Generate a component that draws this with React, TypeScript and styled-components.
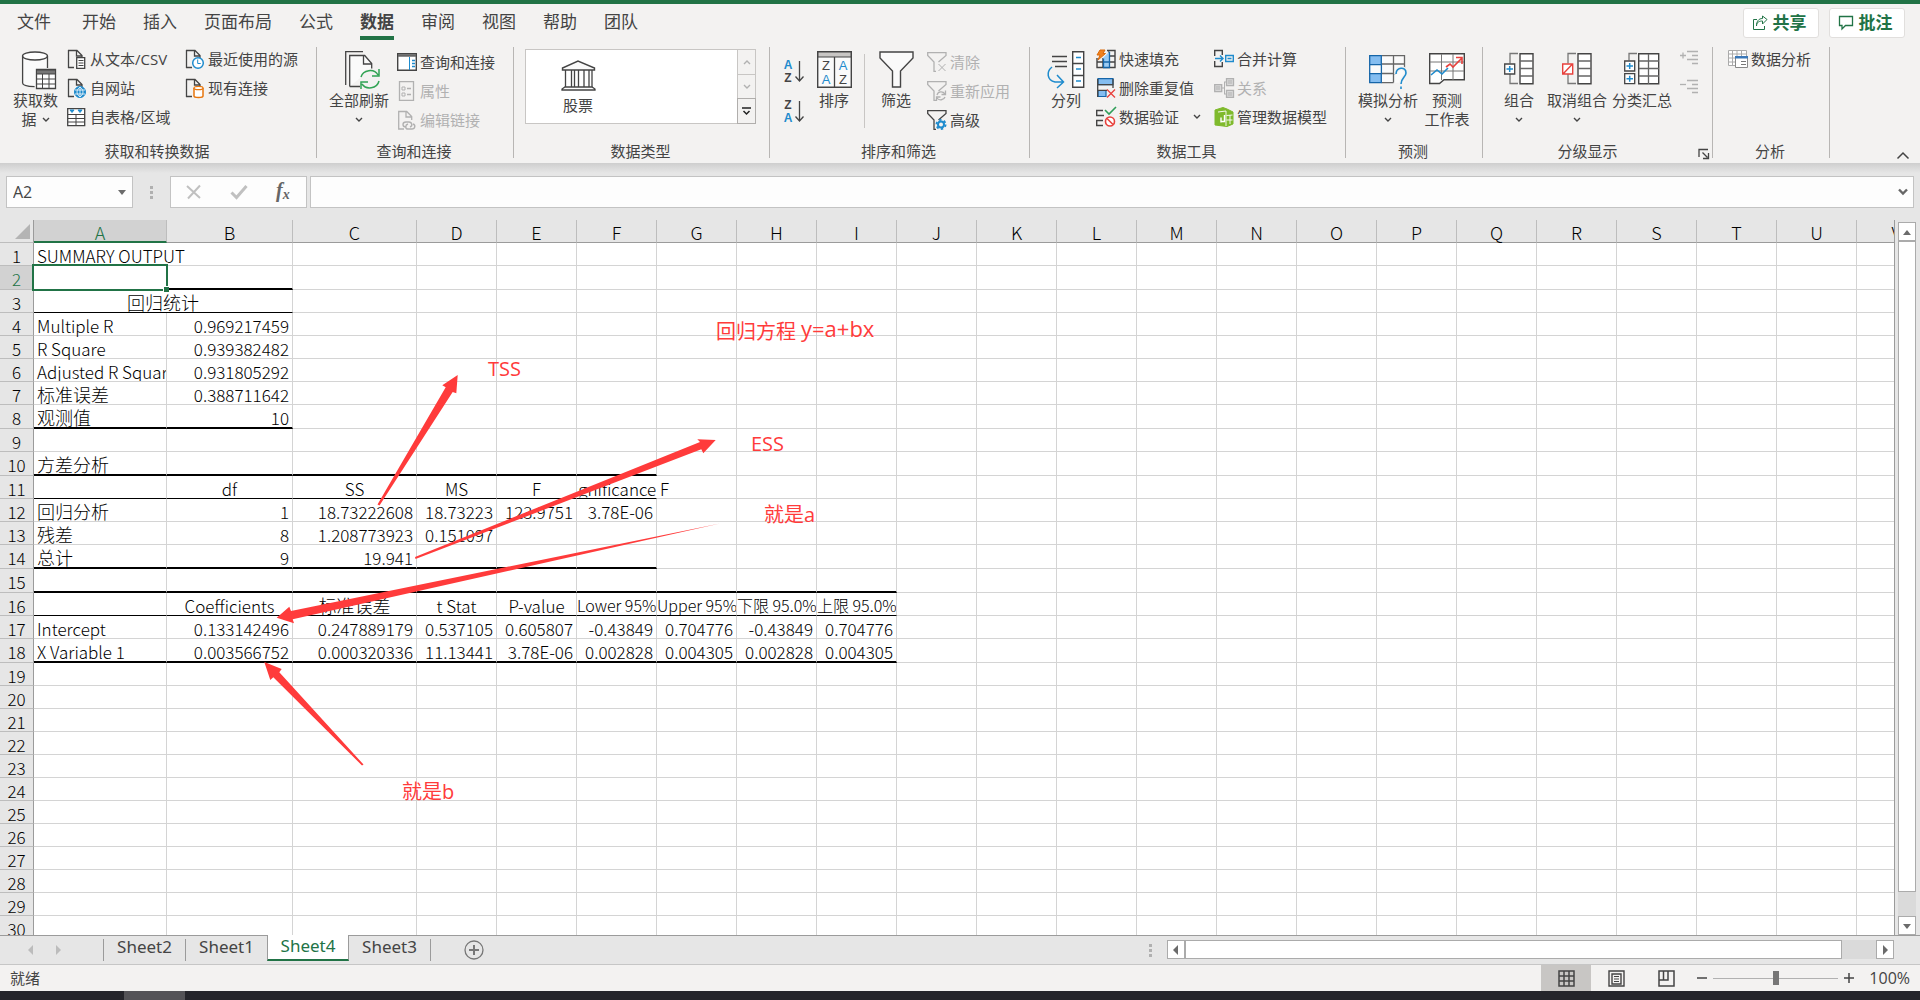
import React from "react";
import styled, { createGlobalStyle, css } from "styled-components";

const uiFont = `"Open Sans", "Noto Sans CJK SC", sans-serif`;
const cellFont = `"Noto Sans CJK SC", sans-serif`;
const green = "#217346";
const ink = "#444444";
const faded = "#b1b1b1";
const blue = "#1e8bcd";
const red = "#ff3b3b";

const Global = createGlobalStyle`
  *, *::before, *::after { box-sizing: border-box; }
  html, body { margin: 0; height: 100%; overflow: hidden; background: #e6e6e6; }
  button, input { font: inherit; color: inherit; margin: 0; padding: 0; border: 0; background: none; border-radius: 0; outline: 0; }
  button { cursor: pointer; }
  svg { display: block; flex: none; overflow: visible; }
`;

const Shell = styled.div`
  display: flex;
  flex-direction: column;
  height: 100vh;
  font: 15px/20px ${uiFont};
  color: ${ink};
  background: #e6e6e6;
`;

const TitleStrip = styled.div`
  height: 4px;
  flex: none;
  background: ${green};
`;

/* ---------- ribbon tabs ---------- */

const TabRow = styled.header`
  display: flex;
  flex: none;
  height: 40px;
  padding: 0 15px 0 17px;
  justify-content: space-between;
  background: #f3f2f1;
`;

const TabList = styled.nav`
  display: flex;
  gap: 27px;
  height: 36px;
`;

const RibbonTab = styled.button<{ $active?: boolean; $first?: boolean }>`
  font-size: 17px;
  line-height: 24px;
  height: 36px;
  padding-top: 4px;
  margin-right: ${(p) => (p.$first ? "4px" : "0")};
  border-bottom: 4px solid ${(p) => (p.$active ? green : "transparent")};
  font-weight: ${(p) => (p.$active ? 700 : 400)};
`;

const ShareRow = styled.div`
  display: flex;
  gap: 10px;
  padding-top: 4px;
`;

const ShareButton = styled.button`
  display: flex;
  align-items: center;
  justify-content: center;
  gap: 5px;
  width: 76px;
  height: 30px;
  padding-right: 4px;
  border: 1px solid #e1dfdd;
  border-radius: 3px;
  background: #fff;
  color: ${green};
  font-size: 17px;
  font-weight: 700;
`;

/* ---------- ribbon ---------- */

const Ribbon = styled.section`
  display: flex;
  flex: none;
  height: 119px;
  background: #f3f2f1;
`;

const GroupBox = styled.div<{ $w: number; $pad: number }>`
  display: flex;
  flex-direction: column;
  justify-content: space-between;
  width: ${(p) => p.$w}px;
  padding-bottom: 2px;
  & > div:first-child {
    padding-left: ${(p) => p.$pad}px;
  }
`;

const GroupBody = styled.div`
  display: flex;
  align-items: flex-start;
`;

const GroupLabel = styled.div`
  display: flex;
  align-items: center;
  height: 20px;
  padding-right: 2px;
  & > span {
    flex: 1;
    text-align: center;
  }
`;

const Divider = styled.div`
  width: 1px;
  margin: 3px 0 5px;
  background: #b8b6b4;
`;

const InnerDivider = styled.div`
  width: 1px;
  height: 74px;
  margin: 10px 6px 0 8px;
  background: #c8c6c4;
`;

const Big = styled.button<{ $w: number; $ml?: number }>`
  display: flex;
  flex-direction: column;
  align-items: center;
  width: ${(p) => p.$w}px;
  margin-left: ${(p) => p.$ml ?? 0}px;
  padding-top: 7px;
  line-height: 19px;
  white-space: nowrap;
  & > svg:first-child {
    margin-bottom: 2px;
  }
`;

const Line = styled.span`
  display: flex;
  align-items: center;
  justify-content: center;
  gap: 5px;
  height: 19px;
`;

const Col = styled.div<{ $w?: number; $ml?: number; $low?: boolean }>`
  display: flex;
  flex-direction: column;
  width: ${(p) => (p.$w ? `${p.$w}px` : "auto")};
  margin: ${(p) => (p.$low ? 3 : 0)}px 0 0 ${(p) => p.$ml ?? 0}px;
`;

const Small = styled.button`
  display: flex;
  align-items: center;
  gap: 3px;
  height: 29px;
  white-space: nowrap;
  &:disabled {
    color: ${faded};
  }
`;

const DropSmall = styled(Small)`
  & > svg:last-child {
    margin-left: 11px;
  }
`;

const SortCol = styled.div`
  display: flex;
  flex-direction: column;
  gap: 16px;
  padding-top: 15px;
  width: 26px;
`;

const SortButton = styled.button`
  height: 24px;
`;

const Gallery = styled.div`
  display: flex;
  width: 231px;
  height: 75px;
  margin-top: 5px;
  border: 1px solid #c8c6c4;
  background: #fff;
`;

const GalleryItem = styled.button`
  display: flex;
  flex-direction: column;
  align-items: center;
  gap: 4px;
  width: 104px;
  padding-top: 10px;
`;

const GalleryScroll = styled.div`
  display: flex;
  flex-direction: column;
  width: 18px;
  margin-left: auto;
  border-left: 1px solid #c8c6c4;
  background: #f3f2f1;
`;

const GalleryArrow = styled.button<{ $last?: boolean }>`
  display: flex;
  flex: 1;
  align-items: center;
  justify-content: center;
  ${(p) => !p.$last && css`border-bottom: 1px solid #c8c6c4;`}
  ${(p) => p.$last && css`outline: 1px solid #b0aeac;`}
`;

const Launcher = styled.button`
  width: 18px;
  height: 14px;
  padding-left: 6px;
  align-self: flex-end;
`;

const Collapse = styled.button`
  margin: auto 10px 3px auto;
`;

/* ---------- formula bar ---------- */

const FormulaRow = styled.section`
  display: flex;
  flex: none;
  height: 57px;
  padding: 13px 6px 12px;
  font-size: 16px;
  background: linear-gradient(#cecece, #e6e6e6 10px);
`;

const Field = styled.div<{ $w?: number }>`
  display: flex;
  align-items: center;
  ${(p) => (p.$w ? `width: ${p.$w}px;` : "flex: 1;")}
  border: 1px solid #c3c3c3;
  background: #fdfdfd;
`;

const NameInput = styled.input`
  flex: 1;
  min-width: 0;
  padding-left: 6px;
`;

const FieldButton = styled.button`
  display: flex;
  align-items: center;
  justify-content: center;
  width: 21px;
  height: 100%;
`;

const FormulaTools = styled(Field)`
  justify-content: center;
  gap: 24px;
  margin-right: 3px;
`;

const Grip = styled.div`
  display: flex;
  flex-direction: column;
  align-items: center;
  justify-content: center;
  gap: 2px;
  width: 37px;
  & > i {
    width: 3px;
    height: 3px;
    background: #b0b0b0;
  }
`;

/* ---------- sheet ---------- */

const SheetArea = styled.main`
  display: flex;
  flex: 1;
  min-height: 0;
`;

const Canvas = styled.div`
  position: relative;
  flex: 1;
  min-width: 0;
  overflow: hidden;
  border-right: 1px solid #9b9b9b;
`;

const Grid = styled.table`
  table-layout: fixed;
  width: 1937px;
  border-collapse: separate;
  border-spacing: 0;
  color: #000;
  background: #fff;
  font: 17px/19px ${cellFont};
`;

const ColHead = styled.th<{ $on?: boolean }>`
  height: 23px;
  padding: 2px 0 0;
  font-size: 18px;
  font-weight: 300;
  line-height: 18px;
  color: ${(p) => (p.$on ? green : "#000")};
  background: ${(p) => (p.$on ? "#d2d2d2" : "#e6e6e6")};
  border-right: 1px solid #bdbdbd;
  border-bottom: ${(p) => (p.$on ? `2px solid ${green}` : "1px solid #9b9b9b")};
`;

const Corner = styled.th`
  padding: 0 3px 3px 0;
  vertical-align: bottom;
  background: #e6e6e6;
  border-right: 1px solid #9b9b9b;
  border-bottom: 1px solid #bdbdbd;
  & > svg {
    margin-left: auto;
  }
`;

const RowHead = styled.th<{ $on?: boolean; $h: number }>`
  height: ${(p) => p.$h}px;
  padding: 2px 0 0;
  font-weight: 300;
  color: ${(p) => (p.$on ? green : "#000")};
  background: ${(p) => (p.$on ? "#d2d2d2" : "#e6e6e6")};
  border-right: 1px solid #9b9b9b;
  border-bottom: 1px solid #bdbdbd;
`;

type CellKind = "num" | "text" | "head";

const Cell = styled.td<{ $kind: CellKind; $rule: number; $open?: boolean; $dense?: boolean; $clip?: boolean }>`
  padding: ${(p) => (p.$kind === "head" ? "2px 0 0" : "2px 3px 0")};
  white-space: nowrap;
  font-weight: 300;
  overflow: ${(p) => (p.$clip ? "hidden" : "visible")};
  text-align: ${(p) => ({ num: "right", text: "left", head: "center" })[p.$kind]};
  font-size: ${(p) => (p.$dense ? 16 : 17)}px;
  border-right: 1px solid ${(p) => (p.$open ? "transparent" : "#d4d4d4")};
  border-bottom: ${(p) => (p.$rule ? `${p.$rule}px solid #000` : "1px solid #d4d4d4")};
`;

const Han = styled.span<{ $dense?: boolean }>`
  font-size: ${(p) => (p.$dense ? 16 : 18)}px;
`;

const Spill = styled.div`
  display: flex;
  justify-content: center;
  clip-path: inset(0 -40px 0 0);
`;

const SelectedCell = styled.td`
  position: relative;
  border-right: 1px solid #d4d4d4;
  border-bottom: 1px solid #d4d4d4;
  &::before {
    content: "";
    position: absolute;
    inset: -2px -2px -2px -2px;
    border: 2px solid ${green};
  }
  &::after {
    content: "";
    position: absolute;
    right: -3px;
    bottom: -3px;
    width: 6px;
    height: 6px;
    border: solid #fff;
    border-width: 1px 0 0 1px;
    background: ${green};
  }
`;

const Arrows = styled.svg`
  position: absolute;
  left: 0;
  top: 0;
  pointer-events: none;
`;

const Note = styled.span<{ $x: number; $y: number; $size?: number }>`
  position: absolute;
  left: ${(p) => p.$x}px;
  top: ${(p) => p.$y}px;
  font-size: ${(p) => p.$size ?? 20}px;
  line-height: 28px;
  color: ${red};
  white-space: nowrap;
`;

/* ---------- scroll bars ---------- */

const VBar = styled.div`
  display: flex;
  flex-direction: column;
  width: 18px;
  margin: 2px 4px 0 3px;
  background: #dadada;
`;

const ScrollButton = styled.button`
  display: flex;
  flex: none;
  align-items: center;
  justify-content: center;
  width: 18px;
  height: 19px;
  border: 1px solid #ababab;
  background: #fff;
`;

const VTrack = styled.div`
  flex: 1;
  padding-bottom: 24px;
`;

const Thumb = styled.div`
  height: 100%;
  border: 1px solid #ababab;
  background: #fff;
`;

/* ---------- sheet tabs ---------- */

const SheetBar = styled.nav`
  display: flex;
  flex: none;
  height: 30px;
  border-top: 1px solid #9b9b9b;
  border-bottom: 1px solid #c6c6c6;
`;

const SheetNav = styled.div`
  display: flex;
  align-items: center;
  gap: 17px;
  width: 103px;
  padding-left: 26px;
`;

const SheetTabs = styled.div`
  display: flex;
  padding-top: 3px;
  height: 25px;
`;

const SheetTab = styled.button<{ $active?: boolean; $last?: boolean }>`
  width: 82px;
  padding-bottom: 6px;
  font: 17px/16px "Noto Sans", sans-serif;
  border-left: 1px solid #9b9b9b;
  ${(p) => p.$last && css`border-left: 0; border-right: 1px solid #9b9b9b;`}
  ${(p) =>
    p.$active &&
    css`
      margin-top: -4px;
      height: 26px;
      padding-bottom: 2px;
      color: ${green};
      background: #fff;
      border-right: 1px solid #9b9b9b;
      border-bottom: 2px solid ${green};
    `}
`;

const AddSheet = styled.button`
  margin-left: 33px;
`;

const BarGrip = styled(Grip)`
  width: 34px;
  margin-left: auto;
`;

const HBar = styled.div`
  display: flex;
  flex: 0 1 727px;
  height: 19px;
  margin: 4px 26px 0 0;
  background: #dadada;
`;

const HTrack = styled.div`
  flex: 1;
  padding-right: 34px;
`;

/* ---------- status bar ---------- */

const StatusBar = styled.footer`
  display: flex;
  flex: none;
  align-items: center;
  justify-content: space-between;
  height: 26px;
  padding: 0 10px;
  background: #f3f2f1;
`;

const StatusTools = styled.div`
  display: flex;
  align-items: center;
`;

const ViewButton = styled.button<{ $active?: boolean }>`
  display: flex;
  align-items: center;
  justify-content: center;
  width: 50px;
  height: 26px;
  background: ${(p) => (p.$active ? "#c8c6c4" : "transparent")};
`;

const ZoomGroup = styled.div`
  display: flex;
  align-items: center;
  gap: 5px;
  margin-left: 5px;
`;

const ZoomButton = styled.button`
  width: 12px;
  height: 20px;
  display: flex;
  align-items: center;
  justify-content: center;
`;

const ZoomRange = styled.input`
  appearance: none;
  width: 125px;
  height: 16px;
  background: linear-gradient(#b1b1b1, #b1b1b1) center / 100% 1px no-repeat;
  &::-webkit-slider-thumb {
    appearance: none;
    width: 6px;
    height: 14px;
    background: #767676;
  }
`;

const ZoomValue = styled.span`
  width: 50px;
  text-align: right;
  font-size: 16px;
`;

const Taskbar = styled.div`
  flex: none;
  height: 9px;
  padding-left: 124px;
  background: #25252b;
`;

const TaskItem = styled.div`
  width: 61px;
  height: 9px;
  background: #545357;
`;

/* ---------- icons ---------- */

type IconProps = { w: number; h: number; box?: string; children: React.ReactNode };
const Icon = ({ w, h, box, children }: IconProps) => (
  <svg width={w} height={h} viewBox={box ?? `0 0 ${w} ${h}`} fill="none" stroke={ink} strokeWidth="1" aria-hidden="true">
    {children}
  </svg>
);

const Chevron = ({ up, color = ink }: { up?: boolean; color?: string }) => (
  <Icon w={8} h={6}>
    <path d={up ? "M1 5L4 2L7 5" : "M1 1L4 4L7 1"} stroke={color} strokeWidth="1.4" />
  </Icon>
);

const Page = ({ color = ink }: { color?: string }) => (
  <path d="M1.500 1v18M1 1.500h9l5 5v3M9.500 1.500v5.500h5.500M1 18.500h6" stroke={color} strokeWidth="1.300" />
);

const DatabaseIcon = () => (
  <Icon w={41} h={38} box="-7 0 41 38">
    <path d="M.7 5v27c0 2 5 4 12.300 4h1V19h12.400V5z" fill="#fafafa" stroke="none" />
    <ellipse cx="13" cy="5" rx="12.500" ry="4" fill="#fff" strokeWidth="1.300" />
    <path d="M.6 5v27c0 2 5 3.500 12 3.700M25.500 5v12" strokeWidth="1.300" />
    <path d="M14.500 18.500h19v19h-19z" fill="#fff" strokeWidth="1.300" />
    <path d="M14.500 19h19v4h-19z" fill="#777" />
    <path d="M14 28h20M14 33h20M20.500 23v15M27 23v15" />
  </Icon>
);

const CsvIcon = () => (
  <Icon w={20} h={20}>
    <Page />
    <path d="M9.700 8.700h8v10.600h-8z" fill="#fff" strokeWidth="1.300" />
    <path d="M11.500 11.500h5M11.500 14h5M11.500 16.500h5" />
  </Icon>
);
const WebIcon = () => (
  <Icon w={20} h={20}>
    <Page />
    <circle cx="13" cy="14" r="5.500" fill={blue} stroke={blue} />
    <path d="M8 12h10M8 16h10M13 9v10M13 9c-4 3-4 7 0 10M13 9c4 3 4 7 0 10" stroke="#fff" strokeWidth=".8" />
  </Icon>
);
const TableIcon = () => (
  <Icon w={20} h={20}>
    <path d="M.7 1.700h17v17h-17z" fill="#fff" strokeWidth="1.300" />
    <path d="M1 7.500h17M1 11.500h17M1 15h17M9 7v11.500" />
    <path d="M3 3h4L5 5.500zM11 3h4l-2 2.500z" fill={blue} stroke={blue} />
  </Icon>
);
const RecentIcon = () => (
  <Icon w={20} h={20}>
    <Page />
    <circle cx="13" cy="14" r="5.300" fill="#fff" stroke={blue} strokeWidth="1.500" />
    <path d="M12.700 10.500v4h3" stroke={blue} />
  </Icon>
);
const ExistingIcon = () => (
  <Icon w={20} h={20}>
    <Page />
    <path d="M9 10v8c0 2 9 2 9 0v-8" fill="#fff" stroke="#e8760c" strokeWidth="1.500" />
    <ellipse cx="13.500" cy="10" rx="4.500" ry="1.700" fill="#fff" stroke="#e8760c" strokeWidth="1.300" />
  </Icon>
);
const RefreshAllIcon = () => (
  <Icon w={41} h={38} box="-6 0 41 38">
    <path d="M.7 34V.7H18" strokeWidth="1.300" />
    <path d="M4.700 35.500V4.500h15l7 8v5M4.700 35.500H15" fill="#fafafa" strokeWidth="1.300" />
    <path d="M18.500 4.500v8.500h8.500" strokeWidth="1.300" />
    <circle cx="25" cy="28" r="10" fill="#f3f2f1" stroke="none" />
    <path d="M16 26c2-7 13-9 17-2M34 18v7h-7M34 30c-2 8-13 9-17 3M16 38v-7h7" stroke="#31a354" strokeWidth="1.500" />
  </Icon>
);
const QueryIcon = () => (
  <Icon w={20} h={20}>
    <path d="M.7 1.700h18.600v16.600H.7z" fill="#fff" strokeWidth="1.400" />
    <path d="M1 3.500h18" strokeWidth="2.500" stroke="#666" />
    <path d="M12.500 5v13" stroke={blue} />
    <path d="M15 8.500h3M15 11.500h3M15 14.500h3" stroke={blue} strokeWidth="1.600" />
  </Icon>
);
const PropsIcon = () => (
  <Icon w={20} h={20}>
    <path d="M2.500.7h14v18.600h-14z" stroke={faded} strokeWidth="1.300" />
    <path d="M5 6h3v3H5zM5 12h3v3H5z" stroke={faded} />
    <path d="M10 7.500h4M10 13.500h4" stroke={faded} strokeWidth="1.500" />
  </Icon>
);
const EditLinksIcon = () => (
  <Icon w={20} h={20}>
    <path d="M7 19H1.700V1.500h8l5 5V10M9 1.500V7h5.500" stroke={faded} strokeWidth="1.300" />
    <path d="M9 17c-4 0-4-5 0-5h3c3 0 4 4 1 5M16 14c3 1 2 5-1 5h-4c-3 0-3-4 0-5" stroke={faded} strokeWidth="1.400" />
  </Icon>
);
const BankIcon = () => (
  <Icon w={35} h={31}>
    <path d="M1.500 10V8L17 1l16.500 7v2z" fill="#fafafa" strokeWidth="1.400" />
    <path d="M4.500 10v17M10.500 10v17M13.500 10v17M17.500 10v17M23 10v17M28 10v17M31 10v17" strokeWidth="1.300" />
    <path d="M4 27h27l3 2v1H1v-1z" fill="#fff" strokeWidth="1.300" />
  </Icon>
);
const letter = (x: number, y: number, ch: string, color: string, size: number, weight = 700) => (
  <text x={x} y={y} fill={color} stroke="none" fontFamily="Liberation Sans" fontSize={size} fontWeight={weight} textAnchor="middle">
    {ch}
  </text>
);
const SortAz = ({ down }: { down?: boolean }) => (
  <Icon w={24} h={24}>
    {letter(6, 10, down ? "Z" : "A", down ? ink : blue, 12)}
    {letter(6, 23, down ? "A" : "Z", down ? blue : ink, 12)}
    <path d="M17.500 2v20M13.500 17.500l4 4.500 4-4.500" strokeWidth="1.300" />
  </Icon>
);
const SortIcon = () => (
  <Icon w={35} h={38}>
    <path d="M.7.7h33.600v35.600H.7z" fill="#fafafa" strokeWidth="1.400" />
    <path d="M1 1h33v5H1z" fill="#c8c6c4" />
    <path d="M17.500 6v30" strokeWidth="1.300" />
    {letter(9, 19, "Z", ink, 13, 400)}
    {letter(9, 33, "A", blue, 13, 400)}
    {letter(26, 19, "A", blue, 13, 400)}
    {letter(26, 33, "Z", ink, 13, 400)}
  </Icon>
);
const FilterIcon = () => (
  <Icon w={35} h={38}>
    <path d="M1 1h33v6L21.500 20v16h-8V20L1 7z" fill="#fafafa" strokeWidth="1.400" />
  </Icon>
);
const funnel = (c: string) => <path d="M11.500 10L19 3.500V.7H.7v2.800L7 10v9.300h2" stroke={c} strokeWidth="1.300" />;
const ClearIcon = () => (
  <Icon w={20} h={20}>
    {funnel(faded)}
    <path d="M11.500 12l7 7M18.500 12l-7 7" stroke={faded} />
  </Icon>
);
const ReapplyIcon = () => (
  <Icon w={20} h={20}>
    {funnel(faded)}
    <path d="M10 14c1-4 6-4 8-1M18.500 9.500v4h-4M18 16c-1 3-6 4-8 1M9.500 20v-4h4" stroke={faded} strokeWidth="1.300" />
  </Icon>
);
const AdvancedIcon = () => (
  <Icon w={20} h={20}>
    {funnel(ink)}
    <circle cx="14" cy="14.500" r="3" fill="#f3f2f1" stroke={blue} strokeWidth="2" />
    <circle cx="14" cy="14.500" r="4.600" stroke={blue} strokeWidth="1.800" strokeDasharray="2.400 2.400" />
  </Icon>
);
const TextToColumnsIcon = () => (
  <Icon w={38} h={38}>
    <path d="M5 5.500h15M5 10.500h15M8 15.500h12" strokeWidth="1.300" />
    <path d="M25.700.7h11v35.600h-11zM25.700 12.500h11M25.700 24.500h11" fill="#fff" strokeWidth="1.400" />
    <path d="M29 6.500h5M29 18h5M29 30h5" stroke={blue} strokeWidth="1.400" />
    <path d="M5 16c-6 5-5 13 3 15h8M10 24l6.500 7L10 37" stroke={blue} strokeWidth="1.500" />
  </Icon>
);
const FlashFillIcon = () => (
  <Icon w={20} h={20}>
    <path d="M1 9v9.500h18V1.500h-8M1 13h18M7 9v9.500M13 2v16.500M10 7h9" fill="none" strokeWidth="1.400" />
    <path d="M7 18V9l7-7v16z" fill="#9cccf4" stroke="none" />
    <path d="M7.500 18.500V9.500M13.500 3v15.500M7 13h7M7 18.500h7" stroke="#1565a8" strokeWidth="1.300" />
    <path d="M4 1h5L7 4.500h2.500L2 11l2-5H1z" fill="#f2811d" stroke="#d96a0b" />
  </Icon>
);
const RemoveDupIcon = () => (
  <Icon w={20} h={20}>
    <path d="M2 .7h15v6H2zM2 12.500h8v6H2z" fill="#84bdf0" stroke="#1565a8" strokeWidth="1.200" />
    <path d="M1.700 1v18M17 1v9M2 6.700h15M2 12.300h9" strokeWidth="1.300" />
    <path d="M11 11.500l8 8M19 11.500l-8 8" stroke="#e8413c" strokeWidth="1.300" />
  </Icon>
);
const ValidateIcon = () => (
  <Icon w={20} h={20}>
    <path d="M7 3.500H.7v5H8M7 13.500H.7v5H7" strokeWidth="1.400" />
    <path d="M9 3l4 4 7-7" stroke="#2f9e58" strokeWidth="1.600" />
    <circle cx="14" cy="14.500" r="4.500" fill="#fff" stroke="#e8413c" strokeWidth="1.600" />
    <path d="M11 11.500l6 6" stroke="#e8413c" strokeWidth="1.600" />
  </Icon>
);
const ConsolidateIcon = () => (
  <Icon w={20} h={20}>
    <path d="M.7 7V1.500h7.600V6M.7 12v5.500h7.600V13" strokeWidth="1.400" />
    <path d="M1 9.500h8M6 6.500l3 3-3 3" stroke={blue} strokeWidth="1.400" />
    <path d="M11.700 6.500h7.600v6h-7.600zM13.500 9.500h4" stroke={blue} strokeWidth="1.400" />
  </Icon>
);
const RelationIcon = () => (
  <Icon w={20} h={20}>
    <path d="M.7 6.700h7v7h-7zM12.500.7h7v7h-7zM12.500 12.300h7v7h-7z" fill="#d8d8d8" stroke={faded} strokeWidth="1.300" />
    <path d="M8 10h3M10.500 4v12M10 4h2M10 16h2M14 3h4M14 5h4M14 15h4M14 17h4M2 9h4M2 11h4" stroke={faded} />
  </Icon>
);
const ModelIcon = () => (
  <Icon w={20} h={20}>
    <path d="M1 3l8-2.500 4 1.500 6 3v12l-6 2.500L1 18z" fill="#7fba2c" stroke="#7fba2c" />
    <path d="M4 5l8-1v15M16 8v9M12.500 8.500l6-.5M12.500 13h6" stroke="#fff" strokeWidth=".9" />
    <path d="M10.500 8v6.500H7M7 10.500v5" stroke="#fff" strokeWidth="1.400" />
  </Icon>
);
const WhatIfIcon = () => (
  <Icon w={38} h={38}>
    <path d="M.7 4.700h35v27H.7z" fill="#fafafa" stroke="none" />
    <path d="M12.500 4.700h23V18M12.500 13h23M12.500 22.500h14M12.500 31.700h12M24.500 5v26.500" stroke="#666" strokeWidth="1.300" />
    <path d="M.7 4.700h11.600v9H.7zM.7 22.700h11.600v9H.7z" fill="#84bdf0" stroke="#1565a8" strokeWidth="1.300" />
    <path d="M.7 14v9M12.400 14v9" stroke="#1565a8" strokeWidth="1.300" />
    <path d="M27 23c0-7 10-8 10-1 0 4-5 5-5 11M32 35v3" stroke="#f3f2f1" strokeWidth="4" />
    <path d="M27 23c0-7 10-8 10-1 0 4-5 5-5 11M32 35.500v2.500" stroke={blue} strokeWidth="1.600" />
  </Icon>
);
const ForecastIcon = () => (
  <Icon w={36} h={38}>
    <path d="M.7 32V2.700h34.600v26H15L10.500 32.500H.7z" fill="#fff" strokeWidth="1.400" />
    <path d="M1 11h34M1 20h34M12.500 3v26M24 3v26" stroke="#777" />
    <path d="M2 24l6-5 5 4 6-6" stroke={blue} strokeWidth="1.600" />
    <path d="M17 16l4-3 3 3 9-9M27 6.500h6V13" stroke="#e8413c" strokeWidth="1.600" />
  </Icon>
);
const rowsBox = (x: number) => (
  <>
    <path d={`M${x} 2.700h13v30h-13z`} fill="#fff" strokeWidth="1.400" />
    <path d={`M${x} 10h13M${x} 17.500h13M${x} 25h13`} stroke="#666" strokeWidth="1.300" />
  </>
);
const GroupIcon = () => (
  <Icon w={30} h={38}>
    <path d="M14 2.500H6v10M6 23v9.500h8" stroke="#777" strokeWidth="1.300" />
    {rowsBox(16)}
    <path d="M.7 13h10v10h-10z" fill="#fff" strokeWidth="1.300" />
    <path d="M2.500 18h6.500M5.700 15v6" stroke={blue} strokeWidth="1.500" />
  </Icon>
);
const UngroupIcon = () => (
  <Icon w={30} h={38}>
    <path d="M14 2.500H6v10M6 23v9.500h8" stroke="#777" strokeWidth="1.300" />
    {rowsBox(16)}
    <path d="M.7 13h10v10h-10zM1 23l9.500-10" fill="#fff" stroke="#e8413c" strokeWidth="1.400" />
  </Icon>
);
const SubtotalIcon = () => (
  <Icon w={36} h={38}>
    <path d="M13 2.500H5v7" stroke="#777" strokeWidth="1.300" />
    <path d="M14.700 2.700h20v30h-20z" fill="#fff" strokeWidth="1.400" />
    <path d="M15 10h20M15 17.500h20M15 25h20M24.500 3v30" stroke="#666" strokeWidth="1.300" />
    <path d="M.7 10h10v10h-10zM.7 22.700h10v10h-10z" fill="#fff" strokeWidth="1.300" />
    <path d="M2.500 15h6.500M5.700 12v6M2.500 27.700h6.500M5.700 24.700v6" stroke={blue} strokeWidth="1.500" />
  </Icon>
);
const DetailIcon = ({ plus }: { plus?: boolean }) => (
  <Icon w={20} h={20}>
    <path d={`M1 6.500h6${plus ? "M4 3.500v6" : ""}`} stroke={faded} strokeWidth="1.300" />
    <path d="M8 2.500h11M13 6.500h6M8 10.500h11M13 14.500h6" stroke={faded} strokeWidth="1.400" />
  </Icon>
);
const AnalysisIcon = () => (
  <Icon w={20} h={20}>
    <path d="M.5 1.500h18v15H.5zM.5 5h18M.5 9h18M.5 13h18M4.500 1.500v15M9 1.500v15M13.500 1.500v15" stroke="#aaa" fill="#fff" />
    <path d="M7.500 8h12v10.500h-12z" fill="#fff" stroke="#888" />
    <path d="M7 7h13v2.500H7z" fill="#3b78b8" stroke="none" />
    <path d="M13 12.500h5M13 15.500h5" stroke="#777" />
  </Icon>
);

/* ---------- data ---------- */

const tabs = ["文件", "开始", "插入", "页面布局", "公式", "数据", "审阅", "视图", "帮助", "团队"];
const columns = "ABCDEFGHIJKLMNOPQRSTUV".split("");
const columnWidths = columns.map((c) => ({ A: 133, B: 126, C: 124 } as Record<string, number>)[c] ?? 80);
const tallRows = [2, 8, 10, 14, 15, 18];

const rows: Record<number, string[]> = {
  1: ["SUMMARY OUTPUT"],
  3: ["回归统计"],
  4: ["Multiple R", "0.969217459"],
  5: ["R Square", "0.939382482"],
  6: ["Adjusted R Square", "0.931805292"],
  7: ["标准误差", "0.388711642"],
  8: ["观测值", "10"],
  10: ["方差分析"],
  11: ["", "df", "SS", "MS", "F", "Significance F"],
  12: ["回归分析", "1", "18.73222608", "18.73223", "123.9751", "3.78E-06"],
  13: ["残差", "8", "1.208773923", "0.151097"],
  14: ["总计", "9", "19.941"],
  16: ["", "Coefficients", "标准误差", "t Stat", "P-value", "Lower 95%", "Upper 95%", "下限 95.0%", "上限 95.0%"],
  17: ["Intercept", "0.133142496", "0.247889179", "0.537105", "0.605807", "-0.43849", "0.704776", "-0.43849", "0.704776"],
  18: ["X Variable 1", "0.003566752", "0.000320336", "11.13441", "3.78E-06", "0.002828", "0.004305", "0.002828", "0.004305"],
};

/* row number -> [first column, last column, thickness] of the black line under it */
const rules: Record<number, [number, number, number]> = {
  2: [1, 1, 2],
  3: [0, 1, 1],
  8: [0, 1, 2],
  10: [0, 5, 2],
  11: [0, 5, 1],
  14: [0, 5, 2],
  15: [0, 8, 2],
  16: [0, 8, 1],
  18: [0, 8, 2],
};

const mixed = (text: string, dense: boolean) =>
  text.split(/([\u4e00-\u9fff]+)/).map((part, i) =>
    i % 2 ? <Han key={i} $dense={dense}>{part}</Han> : part
  );

const SheetRow = ({ n }: { n: number }) => {
  const values = rows[n] ?? [];
  const rule = rules[n];
  return (
    <tr>
      <RowHead scope="row" $h={tallRows.includes(n) ? 24 : 23} $on={n === 2}>{n}</RowHead>
      {columns.map((c, i) => {
        if (n === 3 && i === 1) return null;
        if (n === 2 && i === 0) return <SelectedCell key={c} />;
        const text = values[i] ?? "";
        const head = n === 3 || n === 11 || n === 16;
        const kind: CellKind = head ? "head" : i === 0 ? "text" : "num";
        const spills = n === 11 && i === 5;
        const dense = n === 16 && i >= 5;
        return (
          <Cell
            key={c}
            colSpan={n === 3 && i === 0 ? 2 : undefined}
            $kind={kind}
            $rule={rule && i >= rule[0] && i <= rule[1] ? rule[2] : 0}
            $open={(n === 1 && i === 0) || spills}
            $clip={n === 6 || dense}
            $dense={dense}
          >
            {spills ? <Spill>{text}</Spill> : mixed(text, dense)}
          </Cell>
        );
      })}
    </tr>
  );
};

const Triangle = ({ dir, color = "#6b6b6b" }: { dir: "up" | "down" | "left" | "right"; color?: string }) => {
  const d = { up: "M1 8h8L5 3z", down: "M1 3h8L5 8z", left: "M7 0v10L2 5z", right: "M3 0v10l5-5z" }[dir];
  return (
    <svg width="10" height="10" aria-hidden="true">
      <path d={d} fill={color} />
    </svg>
  );
};

export default function App() {
  return (
    <Shell>
      <Global />
      <TitleStrip />
      <TabRow>
        <TabList>
          {tabs.map((t, i) => (
            <RibbonTab key={t} $active={t === "数据"} $first={i === 0}>{t}</RibbonTab>
          ))}
        </TabList>
        <ShareRow>
          <ShareButton>
            <Icon w={16} h={16}>
              <path d="M5 4.500H1.500v10h11V11M4.500 11c0-4 3-5 6-5V9l4.500-4.500L10.500 1v2.500c-4 0-6 3-6 7.500z" stroke={green} />
            </Icon>
            共享
          </ShareButton>
          <ShareButton>
            <Icon w={16} h={16}>
              <path d="M1.500 1.500h13v9H7.500L4 14v-3.500H1.500z" stroke={green} strokeWidth="1.300" />
            </Icon>
            批注
          </ShareButton>
        </ShareRow>
      </TabRow>

      <Ribbon>
        <GroupBox $w={316} $pad={9}>
          <GroupBody>
            <Big $w={53}><DatabaseIcon /><Line>获取数</Line><Line>据<Chevron /></Line></Big>
            <Col $ml={5} $w={118}>
              <Small><CsvIcon />从文本/CSV</Small>
              <Small><WebIcon />自网站</Small>
              <Small><TableIcon />自表格/区域</Small>
            </Col>
            <Col>
              <Small><RecentIcon />最近使用的源</Small>
              <Small><ExistingIcon />现有连接</Small>
            </Col>
          </GroupBody>
          <GroupLabel><span>获取和转换数据</span></GroupLabel>
        </GroupBox>
        <Divider />
        <GroupBox $w={196} $pad={8}>
          <GroupBody>
            <Big $w={68}><RefreshAllIcon /><Line>全部刷新</Line><Line><Chevron /></Line></Big>
            <Col $ml={4} $low>
              <Small><QueryIcon />查询和连接</Small>
              <Small disabled><PropsIcon />属性</Small>
              <Small disabled><EditLinksIcon />编辑链接</Small>
            </Col>
          </GroupBody>
          <GroupLabel><span>查询和连接</span></GroupLabel>
        </GroupBox>
        <Divider />
        <GroupBox $w={255} $pad={11}>
          <GroupBody>
            <Gallery>
              <GalleryItem><BankIcon />股票</GalleryItem>
              <GalleryScroll>
                <GalleryArrow aria-label="上一行"><Chevron up color={faded} /></GalleryArrow>
                <GalleryArrow aria-label="下一行"><Chevron color={faded} /></GalleryArrow>
                <GalleryArrow aria-label="其他" $last>
                  <Icon w={9} h={9}><path d="M0 1h9M1.500 4l3 3 3-3" strokeWidth="1.500" stroke="#222" /></Icon>
                </GalleryArrow>
              </GalleryScroll>
            </Gallery>
          </GroupBody>
          <GroupLabel><span>数据类型</span></GroupLabel>
        </GroupBox>
        <Divider />
        <GroupBox $w={259} $pad={12}>
          <GroupBody>
            <SortCol>
              <SortButton aria-label="升序"><SortAz /></SortButton>
              <SortButton aria-label="降序"><SortAz down /></SortButton>
            </SortCol>
            <Big $w={44} $ml={4}><SortIcon /><Line>排序</Line></Big>
            <InnerDivider />
            <Big $w={50}><FilterIcon /><Line>筛选</Line></Big>
            <Col $ml={6} $low>
              <Small disabled><ClearIcon />清除</Small>
              <Small disabled><ReapplyIcon />重新应用</Small>
              <Small><AdvancedIcon />高级</Small>
            </Col>
          </GroupBody>
          <GroupLabel><span>排序和筛选</span></GroupLabel>
        </GroupBox>
        <Divider />
        <GroupBox $w={315} $pad={11}>
          <GroupBody>
            <Big $w={50}><TextToColumnsIcon /><Line>分列</Line></Big>
            <Col $ml={5} $w={118}>
              <Small><FlashFillIcon />快速填充</Small>
              <Small><RemoveDupIcon />删除重复值</Small>
              <DropSmall><ValidateIcon />数据验证<Chevron /></DropSmall>
            </Col>
            <Col>
              <Small><ConsolidateIcon />合并计算</Small>
              <Small disabled><RelationIcon />关系</Small>
              <Small><ModelIcon />管理数据模型</Small>
            </Col>
          </GroupBody>
          <GroupLabel><span>数据工具</span></GroupLabel>
        </GroupBox>
        <Divider />
        <GroupBox $w={136} $pad={9}>
          <GroupBody>
            <Big $w={66}><WhatIfIcon /><Line>模拟分析</Line><Line><Chevron /></Line></Big>
            <Big $w={52}><ForecastIcon /><Line>预测</Line><Line>工作表</Line></Big>
          </GroupBody>
          <GroupLabel><span>预测</span></GroupLabel>
        </GroupBox>
        <Divider />
        <GroupBox $w={229} $pad={17}>
          <GroupBody>
            <Big $w={38}><GroupIcon /><Line>组合</Line><Line><Chevron /></Line></Big>
            <Big $w={62} $ml={8}><UngroupIcon /><Line>取消组合</Line><Line><Chevron /></Line></Big>
            <Big $w={62} $ml={3}><SubtotalIcon /><Line>分类汇总</Line></Big>
            <Col $ml={6}>
              <Small disabled aria-label="显示明细数据"><DetailIcon plus /></Small>
              <Small disabled aria-label="隐藏明细数据"><DetailIcon /></Small>
            </Col>
          </GroupBody>
          <GroupLabel>
            <span>分级显示</span>
            <Launcher aria-label="分级显示设置">
              <Icon w={12} h={12}><path d="M1 9V1.500h9M4.500 4.500l5 5M10.500 5v5.500H5" strokeWidth="1.300" /></Icon>
            </Launcher>
          </GroupLabel>
        </GroupBox>
        <Divider />
        <GroupBox $w={116} $pad={15}>
          <GroupBody>
            <Col><Small><AnalysisIcon />数据分析</Small></Col>
          </GroupBody>
          <GroupLabel><span>分析</span></GroupLabel>
        </GroupBox>
        <Divider />
        <Collapse aria-label="折叠功能区">
          <Icon w={14} h={9}><path d="M1.500 7.500L7 2l5.500 5.500" strokeWidth="1.500" /></Icon>
        </Collapse>
      </Ribbon>

      <FormulaRow>
        <Field $w={127}>
          <NameInput aria-label="名称框" defaultValue="A2" />
          <FieldButton aria-label="名称列表"><Triangle dir="down" /></FieldButton>
        </Field>
        <Grip><i /><i /><i /></Grip>
        <FormulaTools $w={137}>
          <FieldButton aria-label="取消">
            <Icon w={16} h={16}><path d="M1 2l13 12M14 1.500L2 14.500" stroke="#c0c0c0" strokeWidth="2" /></Icon>
          </FieldButton>
          <FieldButton aria-label="输入">
            <Icon w={18} h={16}><path d="M1.500 8.500l5 5L16.500 2" stroke="#c0c0c0" strokeWidth="3" /></Icon>
          </FieldButton>
          <FieldButton aria-label="插入函数">
            <svg width="20" height="22" aria-hidden="true">
              <text x="2" y="16" fontFamily="Liberation Serif" fontStyle="italic" fontWeight="700" fontSize="20" fill="#666">
                f<tspan fontSize="14" dy="2">x</tspan>
              </text>
            </svg>
          </FieldButton>
        </FormulaTools>
        <Field>
          <NameInput aria-label="编辑栏" />
          <FieldButton aria-label="展开编辑栏">
            <Icon w={10} h={8}><path d="M1 1.500l4 4 4-4" stroke="#666" strokeWidth="2.400" /></Icon>
          </FieldButton>
        </Field>
      </FormulaRow>

      <SheetArea>
        <Canvas>
          <Grid>
            <colgroup>
              <col style={{ width: 34 }} />
              {columnWidths.map((w, i) => <col key={i} style={{ width: w }} />)}
            </colgroup>
            <thead>
              <tr>
                <Corner aria-label="全选"><svg width="15" height="15"><path d="M15 0v15H0z" fill="#b4b4b4" /></svg></Corner>
                {columns.map((c) => <ColHead key={c} scope="col" $on={c === "A"}>{c}</ColHead>)}
              </tr>
            </thead>
            <tbody>
              {Array.from({ length: 30 }, (_, i) => <SheetRow key={i} n={i + 1} />)}
            </tbody>
          </Grid>
          <Arrows width="740" height="560" fill={red} aria-hidden="true">
            <path d="M377.500 284.500L445.700 167.300L442.300 165.300L457.700 155L456.300 173.300L452.700 172L379.500 285.500z" />
            <path d="M415 337L700 222L697.300 219.300L715.700 220L703.300 233.300L701.300 229.300L415.500 339z" />
            <path d="M720 303.500L291 391L289.300 386.700L276.700 397.700L294 403.300L292.700 399.300z" />
            <path d="M363.500 544.500L279.300 452.300L281.700 449L264.300 442L270.300 460L273.300 457.300L362 545.500z" />
          </Arrows>
          <Note $x={716} $y={98}>回归方程</Note>
          <Note $x={801} $y={94} $size={22}>y=a+bx</Note>
          <Note $x={488} $y={135}>TSS</Note>
          <Note $x={751} $y={210}>ESS</Note>
          <Note $x={764} $y={281}>就是a</Note>
          <Note $x={402} $y={558}>就是b</Note>
        </Canvas>
        <VBar>
          <ScrollButton aria-label="向上滚动"><Triangle dir="up" /></ScrollButton>
          <VTrack><Thumb /></VTrack>
          <ScrollButton aria-label="向下滚动"><Triangle dir="down" /></ScrollButton>
        </VBar>
      </SheetArea>

      <SheetBar>
        <SheetNav><Triangle dir="left" color="#bcbcbc" /><Triangle dir="right" color="#bcbcbc" /></SheetNav>
        <SheetTabs>
          <SheetTab>Sheet2</SheetTab>
          <SheetTab>Sheet1</SheetTab>
          <SheetTab $active>Sheet4</SheetTab>
          <SheetTab $last>Sheet3</SheetTab>
        </SheetTabs>
        <AddSheet aria-label="新工作表">
          <Icon w={20} h={20}>
            <circle cx="10" cy="10" r="9" stroke="#777" strokeWidth="1.300" />
            <path d="M5 10h10M10 5v10" stroke="#777" strokeWidth="2" />
          </Icon>
        </AddSheet>
        <BarGrip><i /><i /><i /></BarGrip>
        <HBar>
          <ScrollButton aria-label="向左滚动"><Triangle dir="left" /></ScrollButton>
          <HTrack><Thumb /></HTrack>
          <ScrollButton aria-label="向右滚动"><Triangle dir="right" /></ScrollButton>
        </HBar>
      </SheetBar>

      <StatusBar>
        <span>就绪</span>
        <StatusTools>
          <ViewButton $active aria-label="普通">
            <Icon w={17} h={17}><path d="M1 1h15v15H1zM1 6h15M1 11h15M6 1v15M11 1v15" strokeWidth="1.500" /></Icon>
          </ViewButton>
          <ViewButton aria-label="页面布局视图">
            <Icon w={17} h={17}>
              <path d="M1 1h15v15H1zM4 4h9v10H4z" strokeWidth="1.400" />
              <path d="M6 6.500h5M6 9h5M6 11.500h5" />
            </Icon>
          </ViewButton>
          <ViewButton aria-label="分页预览">
            <Icon w={17} h={17}><path d="M1 1h15v15H1zM1 10h9V1M5.500 1v9" strokeWidth="1.500" /></Icon>
          </ViewButton>
          <ZoomGroup>
            <ZoomButton aria-label="缩小"><Icon w={10} h={10}><path d="M0 5h10" strokeWidth="1.500" /></Icon></ZoomButton>
            <ZoomRange type="range" aria-label="显示比例" min={0} max={100} defaultValue={50} />
            <ZoomButton aria-label="放大"><Icon w={10} h={10}><path d="M0 5h10M5 0v10" strokeWidth="1.500" /></Icon></ZoomButton>
            <ZoomValue>100%</ZoomValue>
          </ZoomGroup>
        </StatusTools>
      </StatusBar>
      <Taskbar><TaskItem /></Taskbar>
    </Shell>
  );
}
